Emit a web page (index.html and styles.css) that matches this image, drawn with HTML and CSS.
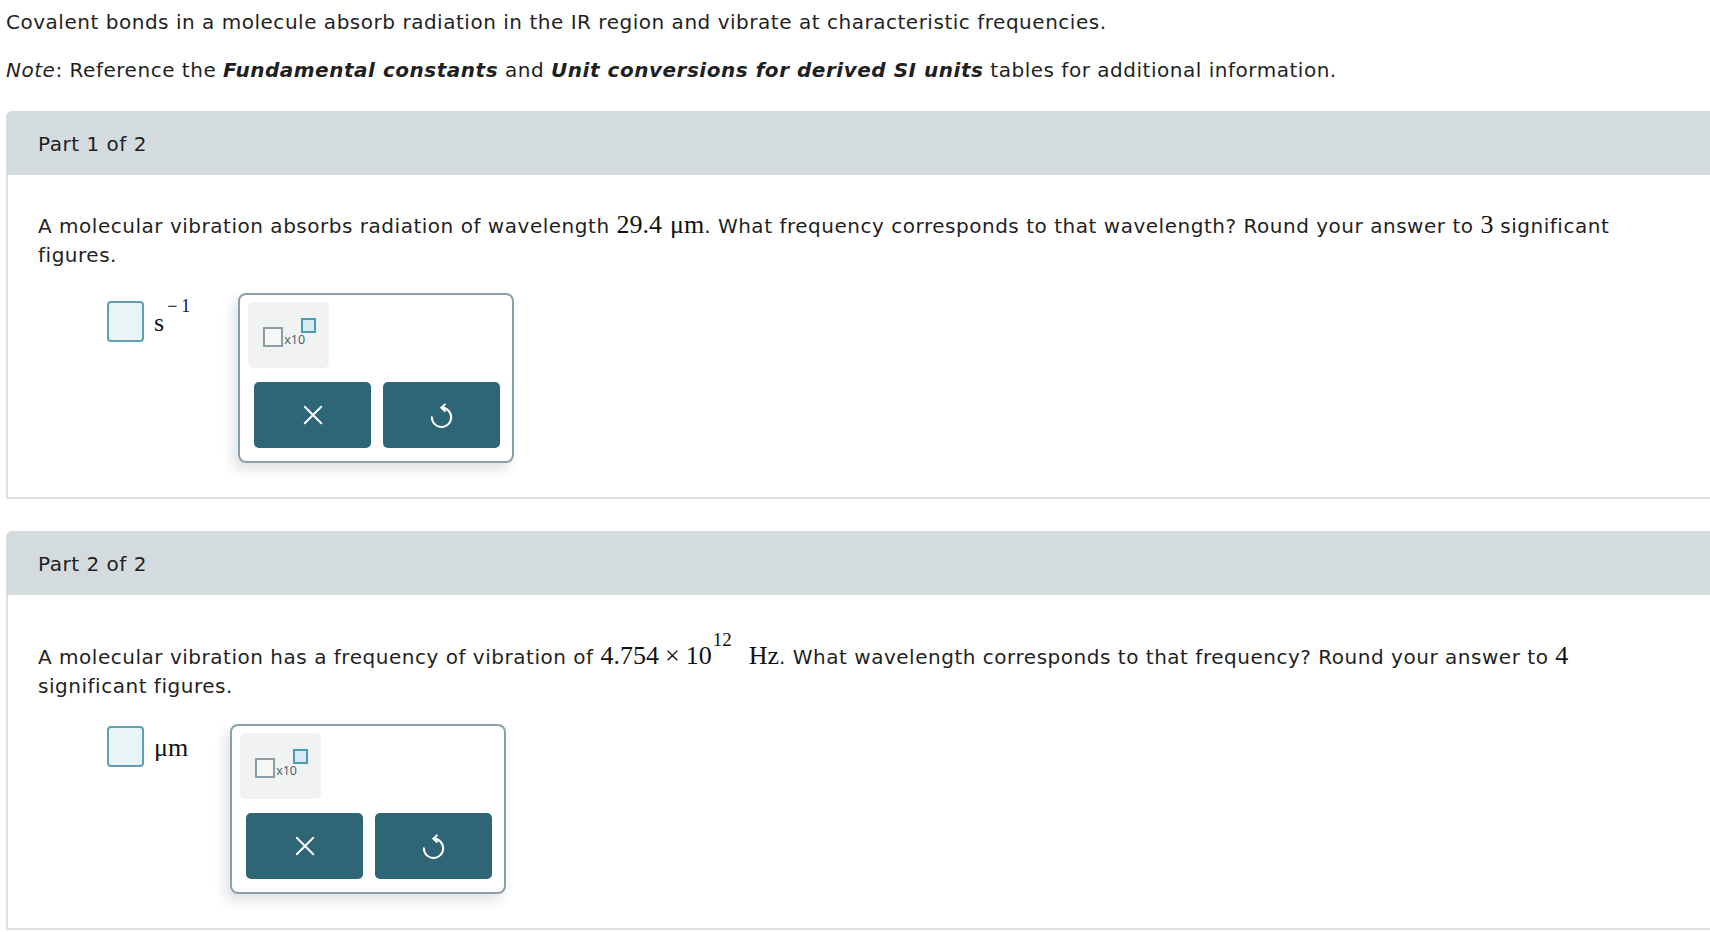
FILE: index.html
```html
<!DOCTYPE html>
<html lang="en">
<head>
<meta charset="utf-8">
<title>Covalent bonds</title>
<link rel="stylesheet" href="styles.css">
</head>
<body>
<p class="intro">Covalent bonds in a molecule absorb radiation in the IR region and vibrate at characteristic frequencies.</p>
<p class="intro"><em>Note</em>: Reference the <strong><em>Fundamental constants</em></strong> and <strong><em>Unit conversions for derived SI units</em></strong> tables for additional information.</p>

<section class="part">
  <div class="part-head">Part 1 of 2</div>
  <div class="part-body">
    <p class="question">A molecular vibration absorbs radiation of wavelength <span class="math">29.4<span class="thin"></span>μm</span>. What frequency corresponds to that wavelength? Round your answer to <span class="math">3</span> significant figures.</p>
    <div class="answer">
      <div class="answer-field field--sup">
        <span class="input-box"></span>
        <span class="unit math">s<span class="unit-sup"><span class="minus">−</span>1</span></span>
      </div>
      <div class="palette palette--wide">
        <div class="palette-top">
          <div class="sci-tile">
            <span class="sci-base"></span><span class="sci-x">x10</span><span class="sci-exp"></span>
          </div>
        </div>
        <div class="palette-actions">
          <button class="pbtn" type="button" aria-label="Clear">
            <svg width="22" height="22" viewBox="0 0 20 20"><path d="M2.5 2.5 L17.5 17.5 M17.5 2.5 L2.5 17.5" stroke="#fff" stroke-width="1.8" stroke-linecap="round" fill="none"/></svg>
          </button>
          <button class="pbtn" type="button" aria-label="Undo">
            <svg width="29" height="29" viewBox="0 0 24 24"><path d="M12 5.5 A8 8 0 1 1 4 13.5" stroke="#fff" stroke-width="1.7" stroke-linecap="round" fill="none"/><path d="M14.8 2.8 L12 5.5 L14.8 8.2" stroke="#fff" stroke-width="1.7" stroke-linecap="round" stroke-linejoin="round" fill="none"/></svg>
          </button>
        </div>
      </div>
    </div>
  </div>
</section>

<section class="part part--next">
  <div class="part-head">Part 2 of 2</div>
  <div class="part-body">
    <p class="question">A molecular vibration has a frequency of vibration of <span class="math">4.754<span class="op">×</span>10<span class="sup">12</span><span class="wide"></span>Hz</span>. What wavelength corresponds to that frequency? Round your answer to <span class="math">4</span> significant figures.</p>
    <div class="answer">
      <div class="answer-field field--plain">
        <span class="input-box"></span>
        <span class="unit math">μm</span>
      </div>
      <div class="palette">
        <div class="palette-top">
          <div class="sci-tile">
            <span class="sci-base"></span><span class="sci-x">x10</span><span class="sci-exp"></span>
          </div>
        </div>
        <div class="palette-actions">
          <button class="pbtn" type="button" aria-label="Clear">
            <svg width="22" height="22" viewBox="0 0 20 20"><path d="M2.5 2.5 L17.5 17.5 M17.5 2.5 L2.5 17.5" stroke="#fff" stroke-width="1.8" stroke-linecap="round" fill="none"/></svg>
          </button>
          <button class="pbtn" type="button" aria-label="Undo">
            <svg width="29" height="29" viewBox="0 0 24 24"><path d="M12 5.5 A8 8 0 1 1 4 13.5" stroke="#fff" stroke-width="1.7" stroke-linecap="round" fill="none"/><path d="M14.8 2.8 L12 5.5 L14.8 8.2" stroke="#fff" stroke-width="1.7" stroke-linecap="round" stroke-linejoin="round" fill="none"/></svg>
          </button>
        </div>
      </div>
    </div>
  </div>
</section>
</body>
</html>
```

FILE: styles.css
```css
html {
  overflow: hidden;
  background: #fff;
}

body {
  margin: 0;
  padding: 8px 0 0 6px;
  font-family: "DejaVu Sans", Verdana, sans-serif;
  font-size: 20px;
  line-height: 28px;
  letter-spacing: 0.52px;
  color: #1f1f1f;
}

.intro {
  margin: 0 0 20px 0;
  white-space: nowrap;
}

.intro strong {
  font-weight: bold;
}

.part {
  width: 1760px;
  margin-top: 27px;
}

.part--next {
  margin-top: 32px;
}

.part-head {
  background: #d4dbdf;
  border-top-left-radius: 6px;
  padding: 19px 32px 17px 32px;
  line-height: 28px;
}

.part-body {
  border-left: 2px solid #dce1e3;
  border-bottom: 2px solid #dce1e3;
  padding: 37px 32px 34px 30px;
}

.question {
  margin: 0;
  max-width: 1618px;
  line-height: 29px;
}

.math {
  font-family: "Liberation Serif", "Times New Roman", serif;
  font-size: 26px;
  line-height: 1;
  letter-spacing: 0;
  color: #111;
}

.thin {
  display: inline-block;
  width: 8px;
}

.op {
  margin: 0 6px;
}

.wide {
  display: inline-block;
  width: 17px;
}

.sup {
  font-size: 19px;
  line-height: 0.8;
  vertical-align: 18px;
  margin-left: 1px;
}

.answer {
  display: flex;
  align-items: flex-start;
  margin-top: 23px;
}

.answer-field {
  display: flex;
  align-items: flex-end;
  margin-left: 69px;
}

.field--sup {
  margin-top: 8px;
}

.field--plain {
  margin-top: 2px;
}

.input-box {
  display: block;
  width: 37px;
  height: 41px;
  box-sizing: border-box;
  border: 2px solid #62a0b1;
  border-radius: 4px;
  background: #e9f4f6;
}

.unit {
  display: block;
  margin-left: 10px;
  margin-bottom: 6px;
}

.unit-sup {
  font-size: 18px;
  line-height: 0;
  vertical-align: 19px;
  margin-left: 3px;
}

.minus {
  margin-right: 4px;
}

.palette {
  margin-left: 42px;
  width: 276px;
  box-sizing: border-box;
  border: 2px solid #8aa0a9;
  border-radius: 8px;
  background: #fff;
  box-shadow: -5px 7px 12px rgba(40, 60, 70, 0.14);
}

.palette--wide {
  margin-left: 48px;
}

.palette-top {
  padding: 7px 0 0 8px;
}

.sci-tile {
  width: 81px;
  height: 66px;
  box-sizing: border-box;
  background: #f1f3f3;
  border-radius: 5px;
  padding: 16px 0 0 15px;
  display: flex;
  align-items: flex-start;
}

.sci-base {
  display: block;
  width: 20px;
  height: 20px;
  box-sizing: border-box;
  border: 2px solid #8a9ea7;
  background: #f6f7f7;
  margin-top: 9px;
}

.sci-x {
  display: block;
  font-family: "Open Sans", "Lato", sans-serif;
  font-size: 12.5px;
  line-height: 12px;
  letter-spacing: 0;
  color: #405c68;
  margin-top: 16px;
  margin-left: 1px;
}

.sci-exp {
  display: block;
  width: 15px;
  height: 15px;
  box-sizing: border-box;
  border: 2px solid #4a9bb5;
  background: #d5ecf3;
  margin-left: -4px;
}

.palette-actions {
  display: flex;
  gap: 12px;
  padding: 14px 12px 13px 14px;
}

.pbtn {
  width: 117px;
  height: 66px;
  border: none;
  border-radius: 5px;
  background: #2e6677;
  display: flex;
  align-items: center;
  justify-content: center;
  padding: 0;
  margin: 0;
}

.pbtn svg {
  display: block;
}
```
